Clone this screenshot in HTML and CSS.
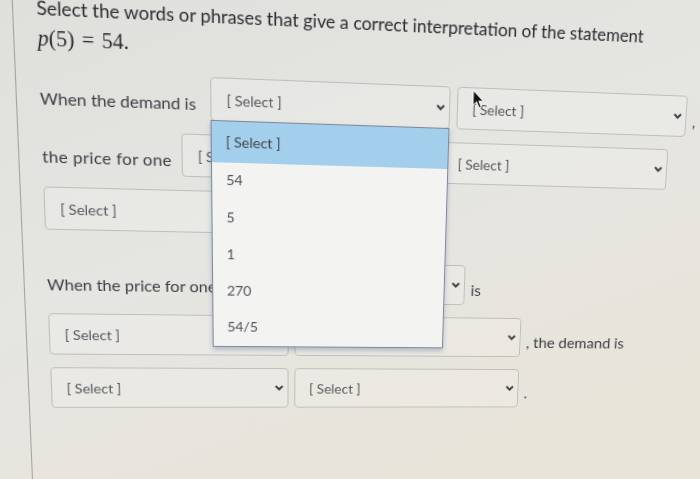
FILE: index.html
```html
<!DOCTYPE html>
<html lang="en">

<head>
    <meta charset="UTF-8">
    <meta name="viewport" content="width=device-width, initial-scale=1.0">
    <title>Quiz question</title>
    <link rel="stylesheet" href="styles.css">
</head>

<body>
    <!-- the screen was photographed at an angle, so the page is tilted as a whole -->
    <div class="page">
        <div class="question">
            <p class="prompt">Select the words or phrases that give a correct interpretation of the statement</p>
            <div class="math"><i>p</i>(5)<span class="eq">=</span>54.</div>

            <div class="para">
                <div class="row">
                    <span class="lbl lead">When the demand is</span>
                    <div class="sel">
                        <span>[ Select ]</span>
                        <svg class="chev" viewBox="0 0 9 6"><path d="M1 1 L4.5 4.5 L8 1" /></svg>
                        <!-- open list of the first blank -->
                        <ul class="dropdown">
                            <li class="active">[ Select ]</li>
                            <li>54</li>
                            <li>5</li>
                            <li>1</li>
                            <li>270</li>
                            <li>54/5</li>
                        </ul>
                    </div>
                    <div class="sel sel-end">
                        <span>[ Select ]</span>
                        <svg class="chev" viewBox="0 0 9 6"><path d="M1 1 L4.5 4.5 L8 1" /></svg>
                        <svg class="cursor" viewBox="0 0 12 19"><path d="M1 1 V15.5 L4.6 12.2 L7.2 18 L9.4 17 L6.9 11.3 H11.5 Z" /></svg>
                    </div>
                    <span class="lbl">,</span>
                </div>
                <div class="row">
                    <span class="lbl lead tight">the price for one</span>
                    <div class="sel sel-wide">
                        <span>[ Select ]</span>
                        <svg class="chev" viewBox="0 0 9 6"><path d="M1 1 L4.5 4.5 L8 1" /></svg>
                    </div>
                    <div class="sel">
                        <span>[ Select ]</span>
                        <svg class="chev" viewBox="0 0 9 6"><path d="M1 1 L4.5 4.5 L8 1" /></svg>
                    </div>
                </div>
                <div class="row">
                    <div class="sel">
                        <span>[ Select ]</span>
                        <svg class="chev" viewBox="0 0 9 6"><path d="M1 1 L4.5 4.5 L8 1" /></svg>
                    </div>
                </div>
            </div>

            <div class="para">
                <div class="row">
                    <span class="lbl lead">When the price for one</span>
                    <div class="sel sel-mid">
                        <span>[ Select ]</span>
                        <svg class="chev" viewBox="0 0 9 6"><path d="M1 1 L4.5 4.5 L8 1" /></svg>
                    </div>
                    <span class="lbl">is</span>
                </div>
                <div class="row">
                    <div class="sel">
                        <span>[ Select ]</span>
                        <svg class="chev" viewBox="0 0 9 6"><path d="M1 1 L4.5 4.5 L8 1" /></svg>
                    </div>
                    <div class="sel">
                        <span>[ Select ]</span>
                        <svg class="chev" viewBox="0 0 9 6"><path d="M1 1 L4.5 4.5 L8 1" /></svg>
                    </div>
                    <span class="lbl">, the demand is</span>
                </div>
                <div class="row">
                    <div class="sel">
                        <span>[ Select ]</span>
                        <svg class="chev" viewBox="0 0 9 6"><path d="M1 1 L4.5 4.5 L8 1" /></svg>
                    </div>
                    <div class="sel">
                        <span>[ Select ]</span>
                        <svg class="chev" viewBox="0 0 9 6"><path d="M1 1 L4.5 4.5 L8 1" /></svg>
                    </div>
                    <span class="lbl">.</span>
                </div>
            </div>
        </div>
    </div>
</body>

</html>
```

FILE: styles.css
```css
html,
body {
    margin: 0;
    height: 100%;
}

body {
    overflow: hidden;
    background: linear-gradient(160deg, #dfe0dc 0%, #e5e5e1 45%, #e9e4d8 100%);
    color: #3b3e44;
    font-family: Lato, "Open Sans", sans-serif;
}

.page {
    box-sizing: border-box;
    width: 700px;
    height: 480px;
    padding-left: 17px;
    transform-origin: 0 0;
    transform: matrix3d(1.124378, 0.053479, 0, 0.00013372,
                        0.049059, 1.109248, 0, 0.00018177,
                        0, 0, 1, 0,
                        -7.7277, -8.253, 0, 1);
}

.question {
    position: relative;
    height: 100%;
    border-left: 1px solid #a3a4a1;
    padding-left: 21px;
}

.prompt {
    margin: 0;
    padding-top: 2px;
    font-size: 17.3px;
    line-height: 22px;
    color: #2a2c31;
    white-space: nowrap;
}

.math {
    margin-top: 2px;
    font-family: "Liberation Serif", serif;
    font-size: 20px;
    line-height: 28px;
    color: #2a2c31;
}

.math .eq {
    margin: 0 7px;
}

.para {
    margin-top: 16px;
}

.para + .para {
    margin-top: 28px;
}

.row {
    display: flex;
    align-items: flex-start;
    column-gap: 6px;
}

.row + .row {
    margin-top: 13px;
}

.lbl {
    font-size: 16px;
    line-height: 20px;
    padding-top: 16px;
    white-space: nowrap;
}

.lbl.lead {
    margin-right: 8px;
}

.lbl.tight {
    margin-right: 4px;
    letter-spacing: 0.3px;
}

.sel {
    position: relative;
    flex: none;
    box-sizing: border-box;
    width: 235px;
    height: 42px;
    display: flex;
    align-items: center;
    justify-content: space-between;
    padding: 0 4px 0 14px;
    border: 1px solid #bdbebb;
    border-radius: 4px;
    background-color: rgba(255, 255, 255, 0.16);
    font-size: 14px;
    color: #55585e;
}

.sel-wide {
    width: 251px;
}

.sel-mid {
    width: 238px;
}

.sel-end {
    width: 239px;
    margin-left: 1px;
}

.chev {
    width: 9px;
    height: 6px;
    fill: none;
    stroke: #3a3c40;
    stroke-width: 2;
}

.dropdown {
    position: absolute;
    top: 100%;
    left: -1px;
    right: -1px;
    z-index: 5;
    margin: 0;
    padding: 0;
    list-style: none;
    background-color: #f3f4f2;
    border: 1px solid #7f8998;
    box-shadow: 0 3px 5px rgba(72, 92, 140, 0.35);
}

.dropdown li {
    padding: 7px 13px 10px;
    line-height: 20px;
    font-size: 14px;
    color: #505359;
}

.dropdown li.active {
    padding-top: 10px;
    background-color: #a3cfec;
    color: #43464c;
}

.cursor {
    position: absolute;
    left: 14px;
    top: 1px;
    width: 12px;
    height: 19px;
    fill: #151515;
    stroke: #ffffff;
    stroke-width: 1;
}
```
